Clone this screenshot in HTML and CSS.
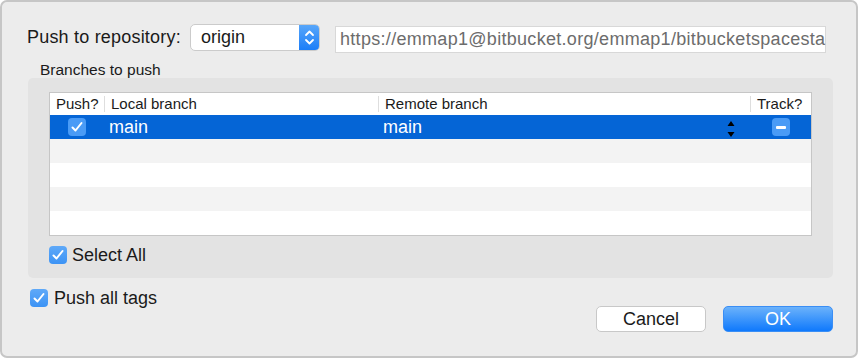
FILE: index.html
```html
<!DOCTYPE html>
<html lang="en">
  <head>
    <meta charset="UTF-8" />
    <title>Push</title>
    <link rel="stylesheet" href="styles.css">
  </head>
  <body>
    <div class="window">
      <div class="repo-row">
        <span class="repo-label">Push to repository:</span>
        <div class="popup">
          <span class="popup-value">origin</span>
          <span class="popup-stepper">
            <svg width="21" height="27" viewBox="0 0 21 27">
              <path d="M7 11 L10.5 7.5 L14 11" fill="none" stroke="#fff" stroke-width="1.8" stroke-linecap="round" stroke-linejoin="round"/>
              <path d="M7 16 L10.5 19.5 L14 16" fill="none" stroke="#fff" stroke-width="1.8" stroke-linecap="round" stroke-linejoin="round"/>
            </svg>
          </span>
        </div>
        <div class="url-field">https://emmap1@bitbucket.org/emmap1/bitbucketspacesta</div>
      </div>

      <div class="group-title">Branches to push</div>
      <div class="group">
        <div class="table">
          <div class="thead">
            <div class="th">Push?</div>
            <div class="th sep">Local branch</div>
            <div class="th sep">Remote branch</div>
            <div class="th sep">Track?</div>
          </div>
          <div class="tr selected">
            <div class="td center">
              <span class="check">
                <svg width="18" height="18" viewBox="0 0 18 18"><path d="M4.5 9.5 L7.5 12.5 L13.5 5" fill="none" stroke="#fff" stroke-width="2" stroke-linecap="round" stroke-linejoin="round"/></svg>
              </span>
            </div>
            <div class="td">main</div>
            <div class="td remote">
              <span>main</span>
              <svg class="arrows" width="8" height="16" viewBox="0 0 8 16"><path d="M4 0 L7.5 5 L0.5 5 Z M0.5 11 L7.5 11 L4 16 Z" fill="#000"/></svg>
            </div>
            <div class="td center">
              <span class="minus"><span class="minus-bar"></span></span>
            </div>
          </div>
          <div class="tr alt"></div>
          <div class="tr"></div>
          <div class="tr alt"></div>
          <div class="tr"></div>
        </div>
        <label class="checkrow select-all">
          <span class="check">
            <svg width="18" height="18" viewBox="0 0 18 18"><path d="M4.5 9.5 L7.5 12.5 L13.5 5" fill="none" stroke="#fff" stroke-width="2" stroke-linecap="round" stroke-linejoin="round"/></svg>
          </span>
          Select All
        </label>
      </div>

      <div class="footer">
        <label class="checkrow tags">
          <span class="check">
            <svg width="18" height="18" viewBox="0 0 18 18"><path d="M4.5 9.5 L7.5 12.5 L13.5 5" fill="none" stroke="#fff" stroke-width="2" stroke-linecap="round" stroke-linejoin="round"/></svg>
          </span>
          Push all tags
        </label>
        <div class="buttons">
          <button class="btn">Cancel</button>
          <button class="btn primary">OK</button>
        </div>
      </div>
    </div>
  </body>
</html>
```

FILE: styles.css
```css
body {
  margin: 0;
  background: #fff;
  font-family: "Helvetica Neue", "Liberation Sans", Arial, sans-serif;
  color: #1a1a1a;
}

.window {
  box-sizing: border-box;
  width: 858px;
  height: 358px;
  border: 2px solid #c6c6c6;
  border-radius: 7px;
  background: #ececec;
  padding: 22px 23px 0 26px;
}

.repo-row {
  display: flex;
  align-items: flex-start;
}

.repo-label {
  flex-shrink: 0;
  font-size: 18px;
  line-height: 27px;
  letter-spacing: 0.2px;
  margin-left: -1px;
  width: 163px;
}

.popup {
  flex-shrink: 0;
  box-sizing: border-box;
  display: flex;
  width: 130px;
  height: 27px;
  background: #fff;
  border: 1px solid #cbcbcb;
  border-radius: 5px;
  overflow: hidden;
}

.popup-value {
  flex: 1;
  font-size: 18px;
  line-height: 25px;
  padding-left: 10px;
}

.popup-stepper {
  display: flex;
  width: 21px;
  margin: -1px -1px -1px 0;
  background: linear-gradient(#5aa8fa, #1a7cf8);
}

.url-field {
  box-sizing: border-box;
  flex: 1;
  min-width: 0;
  height: 27px;
  margin: 2px 7px 0 15px;
  padding-left: 4px;
  background: #fff;
  border: 1px solid #d8d8d8;
  color: #6c6c6c;
  font-size: 18px;
  line-height: 25px;
  letter-spacing: 0.3px;
  white-space: nowrap;
}

.group-title {
  margin: 8px 0 0 12px;
  font-size: 15.5px;
  line-height: 17px;
}

.group {
  background: #e3e3e3;
  border-radius: 5px;
  padding: 14px 21px 14px 21px;
}

.table {
  border: 1px solid #c6c6c6;
  background: #fff;
}

.thead,
.tr {
  display: grid;
  grid-template-columns: 54px 274px 372px 1fr;
}

.thead {
  height: 22px;
  padding: 3px 0;
  box-sizing: border-box;
  font-size: 15px;
  line-height: 16px;
}

.th {
  padding-left: 6px;
}

.th.sep {
  border-left: 1px solid #dedede;
}

.tr {
  height: 24px;
}

.tr.alt {
  background: #f3f3f3;
}

.tr.selected {
  background: #0565d6;
  color: #fff;
  font-size: 18px;
  line-height: 24px;
}

.td {
  padding-left: 5px;
  display: flex;
  align-items: center;
}

.td.center {
  padding-left: 0;
  justify-content: center;
}

.td.remote {
  justify-content: space-between;
  padding-right: 15px;
}

.arrows {
  margin-top: 3px;
}

.check {
  display: inline-flex;
  width: 18px;
  height: 18px;
  border-radius: 4px;
  background: linear-gradient(#5fa9f8, #3c93f5);
}

.selected .check {
  background: #4a9bf6;
}

.minus {
  display: inline-flex;
  align-items: center;
  justify-content: center;
  width: 18px;
  height: 18px;
  border-radius: 4px;
  background: #4a9bf6;
}

.minus-bar {
  width: 10px;
  height: 3px;
  border-radius: 1px;
  background: #fff;
}

.checkrow {
  display: flex;
  align-items: center;
  font-size: 18px;
  line-height: 18px;
}

.select-all {
  margin-top: 10px;
  gap: 5px;
}

.footer {
  display: flex;
  justify-content: space-between;
  align-items: flex-start;
  padding-left: 2px;
}

.tags {
  margin-top: 11px;
  gap: 6px;
}

.buttons {
  display: flex;
  gap: 17px;
  margin-top: 28px;
}

.btn {
  box-sizing: border-box;
  height: 26px;
  width: 110px;
  border-radius: 5px;
  font-family: "Helvetica Neue", "Liberation Sans", Arial, sans-serif;
  font-size: 18px;
  line-height: 24px;
  padding: 0;
  background: #fff;
  color: #1a1a1a;
  border: 1px solid #c8c8c8;
}

.btn.primary {
  border: 1px solid #3a8ef5;
  background: linear-gradient(#6bb2fb, #0f79fc);
  color: #fff;
}
```
